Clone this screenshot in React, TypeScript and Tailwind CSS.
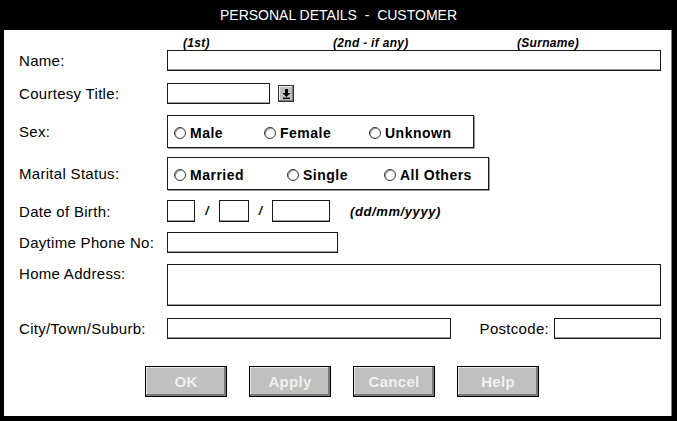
import React from "react";

const font = "font-['Liberation_Sans',Arial,sans-serif]";

const Field = ({ w, h = "h-[21px]" }: { w: string; h?: string }) => (
  <div className={`${w} ${h} border border-[#1a1a1a] bg-white shadow-[inset_0_-1px_0_#9a9a9a]`} />
);

const Radio = ({ label, w }: { label: string; w: string }) => (
  <div className={`flex items-center gap-[4px] ${w}`}>
    <span className="w-[12px] h-[12px] rounded-full border border-[#333] bg-white shadow-[inset_1px_1px_0_#9a9a9a]" />
    <span className="text-[14px] leading-[16px] font-bold tracking-[0.5px] text-black">{label}</span>
  </div>
);

const Label = ({ children, w = "w-[148px]" }: { children: React.ReactNode; w?: string }) => (
  <span className={`${w} shrink-0 text-[15px] leading-[17px] tracking-[0.3px] text-black`}>{children}</span>
);

const Btn = ({ label }: { label: string }) => (
  <button className="w-[82px] h-[31px] bg-[#c0c0c0] border border-black shadow-[inset_-2px_-2px_0_#7a7a7a,inset_1px_1px_0_#e8e8e8] text-[15px] leading-[17px] font-bold tracking-[0.3px] text-[#f0f0f0]">
    {label}
  </button>
);

export default function App() {
  return (
    <div className={`w-[677px] h-[421px] bg-black flex flex-col ${font}`}>
      <div className="h-[30px] flex items-center justify-center text-white text-[14px]">
        PERSONAL DETAILS&nbsp; - &nbsp;CUSTOMER
      </div>
      <div className="flex-1 ml-[4px] mr-[5px] mb-[5px] bg-white border-r border-[#808080] pl-[15px] pr-[10px] flex flex-col">
        <div className="h-[20px] flex items-end pl-[164px] text-[12px] leading-[14px] font-bold italic tracking-[0.3px] text-black">
          <span className="w-[150px]">(1st)</span>
          <span className="w-[184px]">(2nd - if any)</span>
          <span>(Surname)</span>
        </div>
        <div className="flex items-center">
          <Label>Name:</Label>
          <Field w="w-[495px]" />
        </div>
        <div className="flex items-center mt-[12px]">
          <Label>Courtesy Title:</Label>
          <Field w="w-[103px]" />
          <div className="ml-[8px] w-[16px] h-[17px] bg-[#c0c0c0] border border-[#333] shadow-[inset_-1px_-1px_0_#7a7a7a,inset_1px_1px_0_#f0f0f0] flex items-center justify-center">
            <svg width="9" height="10" viewBox="0 0 9 10">
              <path d="M3 0h3v4h2.5L4.5 8 0.5 4H3z" fill="#000" />
              <rect x="1" y="8.6" width="7" height="1.4" fill="#000" />
            </svg>
          </div>
        </div>
        <div className="flex items-center mt-[11px]">
          <Label>Sex:</Label>
          <div className="w-[307px] h-[33px] border border-[#1a1a1a] shadow-[1px_1px_0_#9a9a9a] flex items-center pl-[6px] pt-[2px]">
            <Radio label="Male" w="w-[90px]" />
            <Radio label="Female" w="w-[105px]" />
            <Radio label="Unknown" w="" />
          </div>
        </div>
        <div className="flex items-center mt-[9px]">
          <Label>Marital Status:</Label>
          <div className="w-[322px] h-[33px] border border-[#1a1a1a] shadow-[1px_1px_0_#9a9a9a] flex items-center pl-[6px] pt-[2px]">
            <Radio label="Married" w="w-[113px]" />
            <Radio label="Single" w="w-[97px]" />
            <Radio label="All Others" w="" />
          </div>
        </div>
        <div className="flex items-center mt-[10px]">
          <Label>Date of Birth:</Label>
          <Field w="w-[28px]" h="h-[22px]" />
          <span className="w-[24px] text-center text-[12px] font-bold italic">/</span>
          <Field w="w-[30px]" h="h-[22px]" />
          <span className="w-[23px] text-center text-[12px] font-bold italic">/</span>
          <Field w="w-[58px]" h="h-[22px]" />
          <span className="ml-[20px] text-[13px] leading-[15px] font-bold italic tracking-[0.6px]">(dd/mm/yyyy)</span>
        </div>
        <div className="flex items-center mt-[10px]">
          <Label>Daytime Phone No:</Label>
          <Field w="w-[171px]" />
        </div>
        <div className="flex items-start mt-[11px]">
          <Label>
            <span className="block pt-[1px]">Home Address:</span>
          </Label>
          <Field w="w-[495px]" h="h-[42px]" />
        </div>
        <div className="flex items-center mt-[12px]">
          <Label>City/Town/Suburb:</Label>
          <Field w="w-[284px]" />
          <span className="flex-1 text-right pr-[5px] text-[15px] leading-[17px] tracking-[0.3px]">Postcode:</span>
          <Field w="w-[107px]" />
        </div>
        <div className="flex gap-[22px] mt-[27px] pl-[126px]">
          <Btn label="OK" />
          <Btn label="Apply" />
          <Btn label="Cancel" />
          <Btn label="Help" />
        </div>
      </div>
    </div>
  );
}
